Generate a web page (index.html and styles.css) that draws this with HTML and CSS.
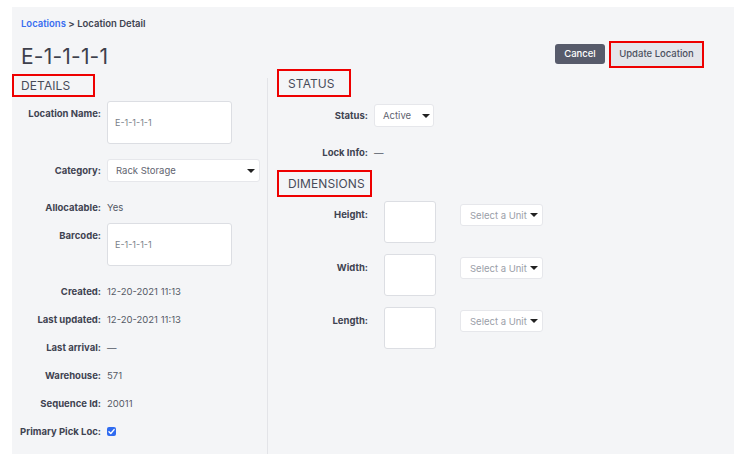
FILE: index.html
```html
<!DOCTYPE html>
<html>
<head>
<meta charset="utf-8">
<link rel="stylesheet" href="styles.css">
</head>
<body>
<div class="panel">
  <div class="breadcrumb"><span class="crumb-link">Locations</span> <span class="crumb-sep">&gt;</span> Location Detail</div>
  <div class="title-row">
    <h1 class="title">E-1-1-1-1</h1>
    <div class="actions">
      <button class="btn btn-cancel">Cancel</button>
      <button class="btn btn-update">Update Location</button>
    </div>
  </div>
  <div class="columns">
    <div class="col col-left">
      <div class="section-title st-details">DETAILS</div>
      <div class="row row-name">
        <div class="label label-top">Location Name:</div>
        <div class="textbox">E-1-1-1-1</div>
      </div>
      <div class="row row-category">
        <div class="label">Category:</div>
        <div class="select select-category"><span>Rack Storage</span><i class="caret"></i></div>
      </div>
      <div class="row row-alloc">
        <div class="label">Allocatable:</div>
        <div class="value">Yes</div>
      </div>
      <div class="row row-barcode">
        <div class="label label-top">Barcode:</div>
        <div class="textbox">E-1-1-1-1</div>
      </div>
      <div class="row row-created">
        <div class="label">Created:</div>
        <div class="value">12-20-2021 11:13</div>
      </div>
      <div class="row row-info">
        <div class="label">Last updated:</div>
        <div class="value">12-20-2021 11:13</div>
      </div>
      <div class="row row-info">
        <div class="label">Last arrival:</div>
        <div class="value">—</div>
      </div>
      <div class="row row-info">
        <div class="label">Warehouse:</div>
        <div class="value">571</div>
      </div>
      <div class="row row-info">
        <div class="label">Sequence Id:</div>
        <div class="value">20011</div>
      </div>
      <div class="row row-info">
        <div class="label">Primary Pick Loc:</div>
        <div class="value"><span class="checkbox"><svg viewBox="0 0 10 10" width="9" height="9"><path d="M2.2 5.2 L4.2 7.2 L7.9 2.9" fill="none" stroke="#fff" stroke-width="1.6" stroke-linecap="round" stroke-linejoin="round"/></svg></span></div>
      </div>
    </div>
    <div class="divider"></div>
    <div class="col col-right">
      <div class="section-title st-status">STATUS</div>
      <div class="rrow rrow-status">
        <div class="label">Status:</div>
        <div class="select select-status"><span>Active</span><i class="caret"></i></div>
      </div>
      <div class="rrow rrow-lock">
        <div class="label">Lock Info:</div>
        <div class="value">—</div>
      </div>
      <div class="section-title st-dimensions">DIMENSIONS</div>
      <div class="drow drow-first">
        <div class="label">Height:</div>
        <div class="dimbox"></div>
        <div class="select select-unit"><span>Select a Unit</span><i class="caret"></i></div>
      </div>
      <div class="drow">
        <div class="label">Width:</div>
        <div class="dimbox"></div>
        <div class="select select-unit"><span>Select a Unit</span><i class="caret"></i></div>
      </div>
      <div class="drow">
        <div class="label">Length:</div>
        <div class="dimbox"></div>
        <div class="select select-unit"><span>Select a Unit</span><i class="caret"></i></div>
      </div>
    </div>
  </div>
</div>
</body>
</html>
```
FILE: styles.css
```css
* { box-sizing: border-box; }
html, body { margin: 0; padding: 0; background: #ffffff; }
body {
  font-family: Inter, "Noto Sans", "Liberation Sans", sans-serif;
  color: #3f4351;
  width: 737px;
  height: 454px;
  overflow: hidden;
}
.panel {
  margin: 7px 3px 0 12px;
  height: 447px;
  background: #f4f5f7;
  padding-top: 11px;
}
.breadcrumb {
  padding-left: 9px;
  font-size: 9.5px;
  font-weight: 600;
  line-height: 12px;
  color: #3f4351;
}
.crumb-link { color: #3a6df0; text-decoration: none; }
.crumb-sep { font-weight: 700; }
.title-row {
  margin-top: 14px;
  height: 25px;
  display: flex;
  align-items: center;
  justify-content: space-between;
  padding-left: 9px;
  padding-right: 32px;
}
.title {
  margin: 0;
  font-size: 21px;
  font-weight: 400;
  line-height: 25px;
  color: #3d404c;
  letter-spacing: 0.2px;
}
.actions { display: flex; gap: 6px; align-items: center; margin-top: -5px; }
.btn {
  font-family: inherit;
  font-size: 9.5px;
  font-weight: 500;
  border: none;
  border-radius: 3px;
  height: 20px;
  padding: 0 9px;
  line-height: 20px;
}
.btn-cancel { background: #575b6b; color: #ffffff; width: 50px; padding: 0; }
.btn-update {
  background: #e4e6eb;
  color: #4b5060;
  width: 91px;
  height: 23px;
  padding: 0;
  border-radius: 0;
  outline: 2px solid #ee0000;
  outline-offset: 0;
}
.columns {
  display: grid;
  grid-template-columns: 255px 1px 1fr;
  height: 386px;
}
.divider { background: #e3e4e8; margin-top: 9px; }
.col { display: flex; flex-direction: column; align-items: flex-start; }
.section-title {
  border: 2px solid #ee0000;
  font-size: 12px;
  line-height: 14px;
  color: #474b59;
  letter-spacing: 0.1px;
}
.st-details { width: 83px; height: 23px; padding: 3px 0 0 7px; margin-top: 5px; }
.st-status { width: 74px; height: 28px; padding: 6px 0 0 9px; margin-left: 9px; }
.st-dimensions { width: 95px; height: 27px; padding: 5px 0 0 9px; margin-left: 9px; margin-top: 11px; }

.label {
  font-size: 9.5px;
  font-weight: 700;
  line-height: 12px;
  text-align: right;
  color: #3f4351;
  white-space: nowrap;
}
.label-top { padding-top: 7px; }
.value { font-size: 9.5px; line-height: 12px; color: #555a66; }

.row {
  display: grid;
  grid-template-columns: 89px auto;
  column-gap: 6px;
  align-items: center;
}
.row-name { margin-top: 4px; align-items: start; }
.row-category { margin-top: 15px; }
.row-alloc { margin-top: 20px; }
.row-barcode { margin-top: 9px; align-items: start; }
.row-created { margin-top: 20px; }
.row-info { margin-top: 16px; }

.textbox {
  width: 125px;
  height: 43px;
  background: #fff;
  border: 1px solid #dcdee3;
  border-radius: 3px;
  font-size: 9px;
  color: #7a7f8a;
  padding: 15px 0 0 7px;
  line-height: 12px;
}
.select {
  display: flex;
  align-items: center;
  justify-content: space-between;
  background: #fff;
  border: 1px solid #e6e7eb;
  border-radius: 3px;
  height: 23px;
  font-size: 9.5px;
  color: #5f6470;
  padding: 0 4px 0 8px;
}
.caret {
  width: 0; height: 0;
  border-left: 4px solid transparent;
  border-right: 4px solid transparent;
  border-top: 4px solid #222;
}
.select-category { width: 153px; }
.select-status { width: 60px; padding-right: 3px; }
.select-unit { width: 83px; height: 22px; padding-left: 9px; color: #9a9ea8; margin-top: 3px; }

.checkbox {
  display: inline-flex;
  width: 9px; height: 9px;
  border-radius: 2px;
  background: #2f6bf0;
  vertical-align: middle;
  margin-top: -2px;
}

.rrow {
  display: grid;
  grid-template-columns: 91px auto;
  column-gap: 6px;
  align-items: center;
  margin-left: 9px;
}
.rrow-status { margin-top: 7px; }
.rrow-lock { margin-top: 20px; }

.drow {
  display: grid;
  grid-template-columns: 91px 52px 83px;
  column-gap: 16px;
  align-items: start;
  margin-left: 9px;
  margin-top: 11px;
}
.drow .select-unit { margin-left: 8px; }
.drow .label { padding-top: 8px; }
.drow-first { margin-top: 4px; }
.dimbox {
  width: 52px;
  height: 42px;
  background: #fff;
  border: 1px solid #dcdee3;
  border-radius: 3px;
}
```
